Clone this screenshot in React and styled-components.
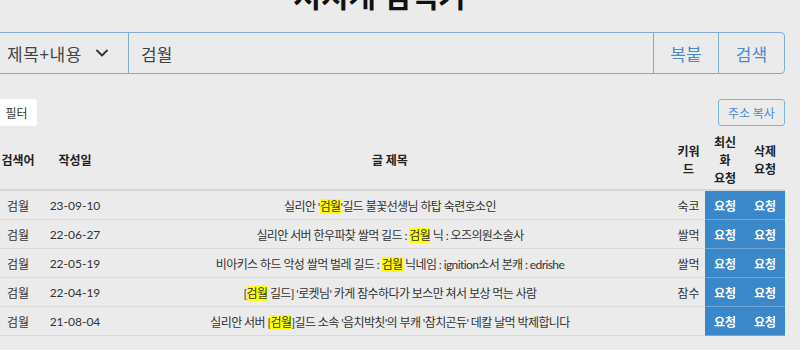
import React from "react";
import styled, { createGlobalStyle } from "styled-components";
import { ChevronDown } from "lucide-react";

const GlobalStyle = createGlobalStyle`
  html, body {
    margin: 0;
    background: #ebebeb;
    overflow: hidden;
  }
  body {
    font-family: Lato, "Noto Sans CJK KR", sans-serif;
    color: #333;
  }
`;

const rows = [
  { word: "검월", date: "23-09-10", title: ["실리안 '", "검월", "'길드 불꽃선생님 하탑 숙련호소인"], key: "숙코" },
  { word: "검월", date: "22-06-27", title: ["실리안 서버 한우파찾 쌀먹 길드 : ", "검월", " 닉 : 오즈의원소술사"], key: "쌀먹" },
  { word: "검월", date: "22-05-19", title: ["비아키스 하드 악성 쌀먹 벌레 길드 : ", "검월", " 닉네임 : ignition소서 본캐 : edrishe"], key: "쌀먹" },
  { word: "검월", date: "22-04-19", title: ["[", "검월", " 길드] '로켓님' 카게 잠수하다가 보스만 쳐서 보상 먹는 사람"], key: "잠수" },
  { word: "검월", date: "21-08-04", title: ["실리안 서버 [", "검월", "]길드 소속 '음치박칫'의 부캐 '참치곤듀' 데칼 날먹 박제합니다"], key: "" },
];

const App = () => {
  return (
    <>
      <GlobalStyle />
      <Page>
        <Title>저지개 검색기</Title>
        <SearchBar>
          <Select>
            <span>제목+내용</span>
            <ChevronDown size={20} strokeWidth={2.2} color="#333" />
          </Select>
          <Query>검월</Query>
          <BarButton>복붙</BarButton>
          <BarButton $last>검색</BarButton>
        </SearchBar>
        <Tools>
          <FilterButton>필터</FilterButton>
          <CopyButton>주소 복사</CopyButton>
        </Tools>
        <Table>
          <colgroup>
            <col style={{ width: 48 }} />
            <col style={{ width: 66 }} />
            <col />
            <col style={{ width: 33 }} />
            <col style={{ width: 40 }} />
            <col style={{ width: 40 }} />
          </colgroup>
          <thead>
            <tr>
              <Th>검색어</Th>
              <Th>작성일</Th>
              <Th>글 제목</Th>
              <Th>키워<br />드</Th>
              <Th>최신<br />화<br />요청</Th>
              <Th>삭제<br />요청</Th>
            </tr>
          </thead>
          <tbody>
            {rows.map((r, i) => (
              <tr key={i}>
                <Td>{r.word}</Td>
                <Td>{r.date}</Td>
                <Td $tight>
                  {r.title[0]}
                  <Mark>{r.title[1]}</Mark>
                  {r.title[2]}
                </Td>
                <Td>{r.key}</Td>
                <ReqCell>요청</ReqCell>
                <ReqCell>요청</ReqCell>
              </tr>
            ))}
          </tbody>
        </Table>
      </Page>
    </>
  );
};

const Page = styled.div`
  margin-left: -6px;
  width: 791px;
`;

const Title = styled.h1`
  margin: -23px 0 0;
  height: 34px;
  line-height: 34px;
  text-align: center;
  font-family: "Noto Sans CJK KR", sans-serif;
  font-size: 30px;
  font-weight: 700;
  color: #111;
  padding-right: 20px;
`;

const SearchBar = styled.div`
  margin-top: 21px;
  display: flex;
  height: 42px;
  box-sizing: border-box;
  border: 1px solid #82acd8;
  border-radius: 0 4px 4px 0;
  font-family: "Noto Sans CJK KR", sans-serif;
  font-size: 17px;
`;

const Select = styled.div`
  width: 134px;
  box-sizing: border-box;
  display: flex;
  align-items: center;
  justify-content: space-between;
  padding: 0 16px 0 12px;
  color: #444;
  letter-spacing: 0.6px;
  border-right: 1px solid #82acd8;
`;

const Query = styled.div`
  flex: 1;
  display: flex;
  align-items: center;
  padding-left: 12px;
  color: #444;
`;

const BarButton = styled.div`
  width: ${(p) => (p.$last ? "66px" : "65px")};
  box-sizing: border-box;
  display: flex;
  align-items: center;
  justify-content: center;
  color: #4a8ad0;
  border-left: 1px solid #82acd8;
`;

const Tools = styled.div`
  margin-top: 25px;
  display: flex;
  justify-content: space-between;
  align-items: center;
  font-family: "Noto Sans CJK KR", sans-serif;
  font-size: 12px;
`;

const FilterButton = styled.div`
  width: 43px;
  height: 27px;
  background: #fff;
  border-radius: 3px;
  display: flex;
  align-items: center;
  justify-content: center;
  padding-left: 2px;
  box-sizing: border-box;
  color: #333;
`;

const CopyButton = styled.div`
  width: 67px;
  height: 27px;
  box-sizing: border-box;
  border: 1px solid #7fb0e2;
  border-radius: 3px;
  display: flex;
  align-items: center;
  justify-content: center;
  color: #4a8ad0;
`;

const Table = styled.table`
  margin-top: 4px;
  width: 100%;
  border-collapse: collapse;
  table-layout: fixed;
  font-size: 12px;
`;

const Th = styled.th`
  height: 59px;
  padding: 0 2px;
  border-bottom: 2px solid #d6d6d6;
  font-family: "Noto Sans CJK KR", sans-serif;
  font-weight: 700;
  line-height: 18px;
  color: #222;
  text-align: center;
`;

const Td = styled.td`
  height: 28px;
  padding: 0 2px;
  border-bottom: 1px solid #dadada;
  text-align: center;
  white-space: nowrap;
  color: #333;
  letter-spacing: ${(p) => (p.$tight ? "-0.6px" : "0")};
`;

const Mark = styled.span`
  background: #ffff00;
`;

const ReqCell = styled.td`
  height: 28px;
  padding: 0;
  background: #3a87c9;
  border-bottom: 1px solid #6fa6d8;
  color: #fff;
  font-family: "Noto Sans CJK KR", sans-serif;
  font-weight: 700;
  text-align: center;
`;

export default App;
